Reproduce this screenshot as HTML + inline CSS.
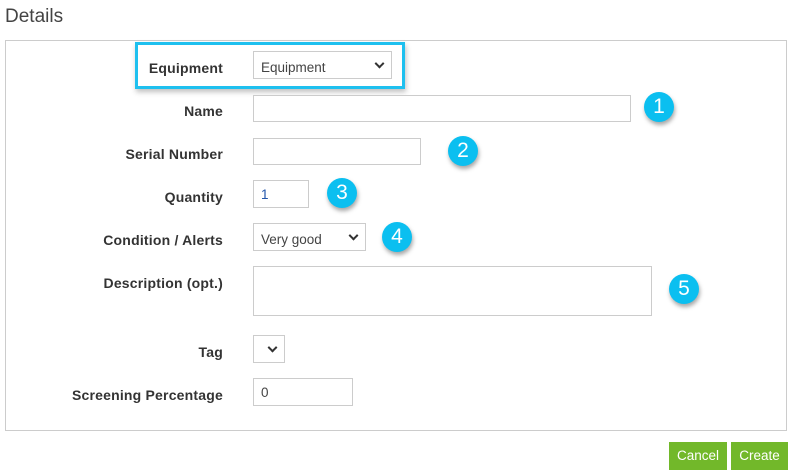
<!DOCTYPE html>
<html><head><style>
body{margin:0;width:796px;height:475px;background:#fff;font-family:"Liberation Sans",sans-serif;position:relative;overflow:hidden}
.a{position:absolute}
h1{position:absolute;left:5px;top:6px;margin:0;font-weight:normal;font-size:19px;color:#444}
.panel{left:5px;top:40px;width:782px;height:391px;border:1px solid #ccc;box-sizing:border-box}
.lab{position:absolute;right:573px;font-weight:bold;font-size:14px;letter-spacing:0.2px;color:#333;white-space:nowrap}
.in{position:absolute;border:1px solid #ccc;box-sizing:border-box;background:#fff;font-size:13.5px;color:#444;padding-left:7px;display:flex;align-items:center}
.sel:after{content:"";position:absolute;right:8px;top:50%;width:5px;height:5px;border-right:2px solid #333;border-bottom:2px solid #333;transform:translateY(-70%) rotate(45deg)}
.b{position:absolute;width:30px;height:30px;border-radius:50%;background:#0bbff0;color:#fff;font-size:21px;text-align:center;line-height:30px;box-shadow:1px 3px 4px rgba(0,0,0,.35)}
.btn{position:absolute;top:442px;height:28px;background:#72b82a;color:#fff;font-size:13.5px;text-align:center;line-height:28px}
</style></head><body>
<h1>Details</h1>
<div class="a panel"></div>
<div class="a" style="left:135px;top:42px;width:270px;height:47px;border:3px solid #1ec0ef;box-sizing:border-box;box-shadow:1px 3px 5px rgba(0,0,0,.25)"></div>
<div class="lab" style="top:60px">Equipment</div>
<div class="in sel" style="left:253px;top:51px;width:139px;height:28px;padding-top:4px">Equipment</div>
<div class="lab" style="top:103px">Name</div>
<div class="in" style="left:253px;top:95px;width:378px;height:27px"></div>
<div class="lab" style="top:146px">Serial Number</div>
<div class="in" style="left:253px;top:138px;width:168px;height:27px"></div>
<div class="lab" style="top:189px">Quantity</div>
<div class="in" style="left:253px;top:180px;width:56px;height:28px;color:#2255aa">1</div>
<div class="lab" style="top:232px">Condition / Alerts</div>
<div class="in sel" style="left:253px;top:223px;width:113px;height:28px;padding-top:4px">Very good</div>
<div class="lab" style="top:275px">Description (opt.)</div>
<div class="in" style="left:253px;top:266px;width:399px;height:50px"></div>
<div class="lab" style="top:344px">Tag</div>
<div class="in sel" style="left:253px;top:335px;width:32px;height:28px"></div>
<div class="lab" style="top:387px">Screening Percentage</div>
<div class="in" style="left:253px;top:378px;width:100px;height:28px">0</div>
<div class="b" style="left:644px;top:92px">1</div>
<div class="b" style="left:448px;top:136px">2</div>
<div class="b" style="left:327px;top:178px">3</div>
<div class="b" style="left:382px;top:222px">4</div>
<div class="b" style="left:669px;top:274px">5</div>
<div class="btn" style="left:669px;width:58px">Cancel</div>
<div class="btn" style="left:731px;width:57px">Create</div>
</body></html>
